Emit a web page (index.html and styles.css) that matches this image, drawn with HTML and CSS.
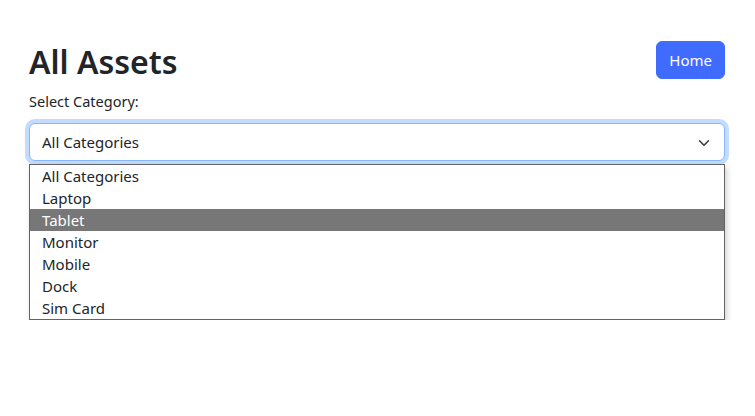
FILE: index.html
```html
<!DOCTYPE html>
<html lang="en">
<head>
<meta charset="utf-8">
<title>All Assets</title>
<link rel="stylesheet" href="styles.css">
</head>
<body>
<div class="container">
  <div class="header">
    <h1 class="title">All Assets</h1>
    <button class="btn-home" type="button">Home</button>
  </div>
  <label class="form-label">Select Category:</label>
  <div class="select-wrap">
    <div class="select">
      <span class="select-value">All Categories</span>
      <svg class="chevron" width="16" height="12" viewBox="0 0 16 16" aria-hidden="true"><path d="m2 5 6 6 6-6" fill="none" stroke="#343a40" stroke-width="2" stroke-linecap="round" stroke-linejoin="round"/></svg>
    </div>
    <div class="option-list">
      <div class="option">All Categories</div>
      <div class="option">Laptop</div>
      <div class="option selected">Tablet</div>
      <div class="option">Monitor</div>
      <div class="option">Mobile</div>
      <div class="option">Dock</div>
      <div class="option">Sim Card</div>
    </div>
  </div>
</div>
</body>
</html>
```

FILE: styles.css
```css
* { box-sizing: border-box; }
html, body { margin: 0; padding: 0; background: #fff; }
body {
  font-family: "Noto Sans", "Open Sans", sans-serif;
  color: #212529;
  font-size: 16px;
  line-height: 1.5;
}
.container {
  padding: 41px 30px 0 29px;
}
.header {
  display: flex;
  justify-content: space-between;
  align-items: flex-start;
}
.title {
  margin: 2px 0 0;
  font-size: 32px;
  font-weight: 600;
  line-height: 1.2;
}
.btn-home {
  font-family: inherit;
  font-size: 15px;
  line-height: 24px;
  padding: 6px 12px;
  color: #fff;
  background: #3f6bff;
  border: 1px solid #3f6bff;
  border-radius: 6px;
}
.form-label {
  display: block;
  margin-top: 10px;
  margin-bottom: 10px;
  font-size: 14.5px;
}
.select-wrap {
  display: flex;
  flex-direction: column;
}
.select {
  display: flex;
  align-items: center;
  justify-content: space-between;
  height: 38px;
  padding: 0 12px;
  border: 1px solid #86b7fe;
  border-radius: 6px;
  box-shadow: 0 0 0 4px rgba(13, 110, 253, 0.25);
  background: #fff;
  font-size: 15px;
}
.chevron { display: block; margin-top: 1px; }
.option-list {
  margin-top: 3px;
  border: 1px solid #646464;
  background: #fff;
  box-shadow: 2px 3px 6px rgba(0, 0, 0, 0.18);
}
.option {
  height: 22px;
  line-height: 22px;
  padding-left: 12px;
  font-size: 15px;
  color: #212529;
}
.option.selected {
  background: #777;
  color: #fff;
}
```
